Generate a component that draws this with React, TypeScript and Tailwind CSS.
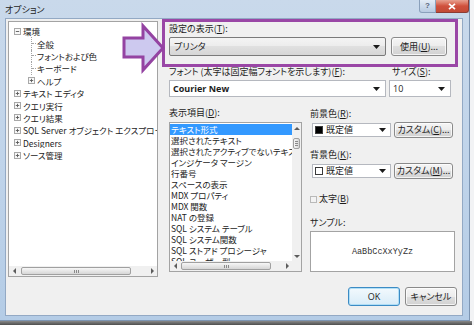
import type { ReactNode } from "react";

const JP = "font-['Noto_Sans_CJK_JP','Noto_Sans',sans-serif] [font-feature-settings:'palt']";

function DownArrow() {
  return (
    <svg width="7" height="4" viewBox="0 0 7 4" className="shrink-0">
      <path d="M0 0h7L3.5 4z" fill="#1a1a1a" />
    </svg>
  );
}

function Expander({ open = false }: { open?: boolean }) {
  return (
    <svg width="7" height="7" viewBox="0 0 7 7" className="shrink-0">
      <rect x="0.5" y="0.5" width="6" height="6" fill="#f8f8f8" stroke="#a8a8a8" />
      <path d="M1.8 3.5h3.4" stroke="#5a5a5a" strokeWidth="0.9" />
      {!open && <path d="M3.5 1.8v3.4" stroke="#5a5a5a" strokeWidth="0.9" />}
    </svg>
  );
}

function Btn({ children, className = "" }: { children: ReactNode; className?: string }) {
  return (
    <div
      className={`flex items-center justify-center rounded-[3px] border border-[#8a8a8a] bg-[linear-gradient(#f5f5f5,#ececec_50%,#dedede_50%,#d2d2d2)] shadow-[inset_0_0_0_1px_rgba(255,255,255,0.75)] ${className}`}
    >
      {children}
    </div>
  );
}

function Tri({ dir }: { dir: "up" | "down" | "left" | "right" }) {
  const d =
    dir === "up" ? "M0 4h6L3 1z" : dir === "down" ? "M0 1h6L3 4z" : dir === "left" ? "M4 0v6L1 3z" : "M1 0v6L4 3z";
  const vert = dir === "up" || dir === "down";
  return (
    <svg width={vert ? 6 : 5} height={vert ? 5 : 6} viewBox={vert ? "0 0 6 5" : "0 0 5 6"}>
      <path d={d} fill="#5c5c5c" />
    </svg>
  );
}

function Grip({ vertical = false }: { vertical?: boolean }) {
  const bar = vertical ? "h-[1px] w-[3px] bg-[#8a8a8a]" : "h-[3px] w-[1px] bg-[#8a8a8a]";
  return (
    <div className={`flex ${vertical ? "flex-col" : ""} gap-[1px]`}>
      <span className={bar} />
      <span className={bar} />
      <span className={bar} />
    </div>
  );
}

function HScroll({ thumbLeft, thumbWidth }: { thumbLeft: string; thumbWidth: string }) {
  return (
    <div className="flex h-[10px] flex-1 items-center bg-[#f0f0f0]">
      <div className="flex h-full w-[10px] items-center justify-center">
        <Tri dir="left" />
      </div>
      <div className="flex h-full flex-1 items-center">
        <div
          className={`flex h-[8px] items-center justify-center rounded-[2px] border border-[#a0a0a0] bg-linear-to-b from-[#f7f7f7] to-[#d6d6d6] ${thumbLeft} ${thumbWidth}`}
        >
          <Grip />
        </div>
      </div>
      <div className="flex h-full w-[10px] items-center justify-center">
        <Tri dir="right" />
      </div>
    </div>
  );
}

const treeTop = ["テキスト エディタ", "クエリ実行", "クエリ結果", "SQL Server オブジェクト エクスプローラー", "Designers", "ソース管理"];

const items = [
  "選択されたテキスト",
  "選択されたアクティブでないテキスト",
  "インジケータ マージン",
  "行番号",
  "スペースの表示",
  "MDX プロパティ",
  "MDX 関数",
  "NAT の登録",
  "SQL システム テーブル",
  "SQL システム関数",
  "SQL ストアド プロシージャ",
  "SQL ユーザー型",
];

function Child({ label }: { label: string }) {
  return (
    <div className="flex h-[12.4px] items-center pl-[22px]">
      <span className="flex h-full w-[5px] items-center border-l border-dotted border-[#a5a5a5]">
        <span className="w-full border-t border-dotted border-[#a5a5a5]" />
      </span>
      <span className="ml-[1px] whitespace-nowrap">{label}</span>
    </div>
  );
}

export default function App() {
  return (
    <div className={`relative h-[325px] w-[474px] overflow-hidden bg-[#f2f3f5] text-[9px] leading-[10px] text-[#1c1c1c] ${JP}`}>
      <div className="flex h-[321px] w-[470px] flex-col border-r border-b border-[#7d95b2] bg-linear-to-b from-[#c9d9eb] via-[#c0d4ea] to-[#b4cce6]">
        {/* title bar */}
        <div className="flex h-[18px] items-start">
          <span className="mt-[5px] ml-[5px] flex-1 text-[9px] text-[#1e1e1e]">オプション</span>
          <div className="flex h-[13px] w-[17px] items-center justify-center rounded-bl-[3px] border border-t-0 border-[#8aa0bb] bg-linear-to-b from-[#e3ecf6] to-[#b8cbe2]">
            <span className="font-['Liberation_Sans',sans-serif] text-[8px] font-bold text-[#56657a]">?</span>
          </div>
          <div className="flex h-[13px] w-[33px] items-center justify-center rounded-br-[3px] border border-t-0 border-l-0 border-[#8c3c34] bg-linear-to-b from-[#e6a090] via-[#d0503c] to-[#c24a36]">
            <svg width="8" height="7" viewBox="0 0 8 7">
              <path d="M1 0.8l6 5.4M7 0.8l-6 5.4" stroke="#ffffff" strokeWidth="1.7" />
            </svg>
          </div>
        </div>

        {/* client area */}
        <div className="ml-[5px] mr-[6px] flex h-[298px] flex-col border border-[#93a9c4] bg-[#f0f0f0]">
          <div className="flex items-start">
            {/* tree */}
            <div className="mt-[2px] ml-[2px] flex h-[256px] w-[150px] flex-col border border-[#a3a3a3] bg-white text-[8.5px]">
              <div className="flex-1 overflow-hidden pt-[3px]">
                <div className="flex h-[12.4px] items-center pl-[5px]">
                  <Expander open />
                  <span className="ml-[2px]">環境</span>
                </div>
                <Child label="全般" />
                <Child label="フォントおよび色" />
                <Child label="キーボード" />
                <div className="flex h-[12.4px] items-center pl-[19px]">
                  <Expander />
                  <span className="ml-[2px]">ヘルプ</span>
                </div>
                {treeTop.map((t) => (
                  <div key={t} className="flex h-[12.4px] items-center overflow-hidden pl-[5px]">
                    <Expander />
                    <span className="ml-[2px] min-w-0 overflow-hidden whitespace-nowrap">{t}</span>
                  </div>
                ))}
              </div>
              <div className="flex">
                <HScroll thumbLeft="ml-[2px]" thumbWidth="w-[110px]" />
              </div>
            </div>

            {/* right panel */}
            <div className="ml-[11px] flex flex-col">
              <div className="mt-[5px]">
                設定の表示(<u>T</u>):
              </div>
              <div className="mt-[3px] flex items-center">
                <div className="flex h-[19px] w-[217px] items-center justify-between rounded-[2px] border border-[#7a7a7a] bg-[linear-gradient(#f4f4f4,#ececec_50%,#e0e0e0_50%,#d6d6d6)] pr-[5px] pl-[4px]">
                  <span>プリンタ</span>
                  <DownArrow />
                </div>
                <Btn className="ml-[5px] h-[19px] w-[56px]">
                  使用(<u>U</u>)...
                </Btn>
              </div>

              <div className="mt-[11px] flex">
                <div className="w-[220px] whitespace-nowrap">
                  フォント (太字は固定幅フォントを示します)(<u>F</u>):
                </div>
                <div className="ml-[3px]">
                  サイズ(<u>S</u>):
                </div>
              </div>
              <div className="mt-[3px] flex">
                <div className="flex h-[17px] w-[217px] items-center justify-between border border-[#b5b8bf] bg-white pr-[5px] pl-[3px]">
                  <span className="font-['Open_Sans','Liberation_Sans',sans-serif] text-[9px] font-bold">Courier New</span>
                  <DownArrow />
                </div>
                <div className="ml-[3px] flex h-[17px] w-[62px] items-center justify-between border border-[#b5b8bf] bg-white pr-[5px] pl-[3px]">
                  <span className="font-['Open_Sans','Liberation_Sans',sans-serif]">10</span>
                  <DownArrow />
                </div>
              </div>

              <div className="mt-[11px] flex">
                {/* list */}
                <div className="flex w-[133px] flex-col">
                  <div>
                    表示項目(<u>D</u>):
                  </div>
                  <div className="mt-[4px] flex h-[150px] flex-col border border-[#a3a3a3] bg-white text-[8.5px]">
                    <div className="flex flex-1 overflow-hidden">
                      <div className="flex-1 overflow-hidden pt-[1px]">
                        <div className="flex h-[11px] items-center overflow-hidden bg-[#3399ff] pl-[1px] leading-[11px] whitespace-nowrap text-white">
                          テキスト形式
                        </div>
                        {items.map((t) => (
                          <div key={t} className="flex h-[11px] items-center overflow-hidden pl-[1px] leading-[11px] whitespace-nowrap">
                            {t}
                          </div>
                        ))}
                      </div>
                      <div className="flex w-[9px] flex-col bg-[#f0f0f0]">
                        <div className="flex h-[10px] items-center justify-center">
                          <Tri dir="up" />
                        </div>
                        <div className="flex-1">
                          <div className="mx-[1px] mt-[5px] flex h-[11px] items-center justify-center rounded-[2px] border border-[#a0a0a0] bg-linear-to-r from-[#f7f7f7] to-[#d6d6d6]">
                            <Grip vertical />
                          </div>
                        </div>
                        <div className="flex h-[10px] items-center justify-center">
                          <Tri dir="down" />
                        </div>
                      </div>
                    </div>
                    <div className="flex">
                      <HScroll thumbLeft="ml-[1px]" thumbWidth="w-[90px]" />
                      <div className="h-[10px] w-[9px] bg-[#f0f0f0]" />
                    </div>
                  </div>
                </div>

                {/* colours */}
                <div className="ml-[8px] flex w-[145px] flex-col">
                  <div className="mt-[1px]">
                    前景色(<u>R</u>):
                  </div>
                  <div className="mt-[3px] flex items-center">
                    <div className="ml-[2px] flex h-[14px] w-[79px] items-center border border-[#b5b8bf] bg-white pr-[4px] pl-[2px]">
                      <span className="h-[8px] w-[8px] border border-[#3a3a3a] bg-black" />
                      <span className="ml-[3px] flex-1">既定値</span>
                      <DownArrow />
                    </div>
                    <Btn className="ml-[3px] h-[16px] w-[59px]">
                      カスタム(<u>C</u>)...
                    </Btn>
                  </div>
                  <div className="mt-[12px]">
                    背景色(<u>K</u>):
                  </div>
                  <div className="mt-[3px] flex items-center">
                    <div className="ml-[2px] flex h-[14px] w-[79px] items-center border border-[#b5b8bf] bg-white pr-[4px] pl-[2px]">
                      <span className="h-[8px] w-[8px] border border-[#3a3a3a] bg-white" />
                      <span className="ml-[3px] flex-1">既定値</span>
                      <DownArrow />
                    </div>
                    <Btn className="ml-[3px] h-[16px] w-[59px]">
                      カスタム(<u>M</u>)...
                    </Btn>
                  </div>
                  <div className="mt-[15px] flex items-center">
                    <span className="h-[7px] w-[7px] border border-[#b9b9b9] bg-[#f3f3f3]" />
                    <span className="ml-[2px]">
                      太字(<u>B</u>)
                    </span>
                  </div>
                  <div className="mt-[14px]">サンプル:</div>
                  <div className="mt-[3px] flex h-[41px] items-center justify-center border border-[#a3a3a3] bg-white">
                    <span className="font-['Liberation_Mono',monospace] text-[8.5px] text-[#333]">AaBbCcXxYyZz</span>
                  </div>
                </div>
              </div>
            </div>
          </div>

          <div className="mt-[10px] mr-[5px] flex justify-end gap-[5px]">
            <div className="flex h-[19px] w-[52px] items-center justify-center rounded-[3px] border border-[#3c8bc4] bg-linear-to-b from-[#f2f9fd] to-[#d9ecf8] font-['Open_Sans','Liberation_Sans',sans-serif] shadow-[inset_0_0_0_1px_rgba(170,220,245,0.9)]">
              OK
            </div>
            <Btn className="h-[19px] w-[52px]">キャンセル</Btn>
          </div>
        </div>
      </div>
      <div className="h-[4px] w-[472px] bg-linear-to-b from-[#8a8a8a] to-[#4e4e4e]" />

      {/* annotation overlays */}
      <div className="pointer-events-none absolute top-[19px] left-[162px] h-[48px] w-[296px] border-[3px] border-[#9a47a6]" />
      <svg className="pointer-events-none absolute top-0 left-0" width="474" height="325" viewBox="0 0 474 325">
        <polygon points="124,38 143,38 143,26 163,48 143,70 143,57 124,57" fill="#cdc9ef" stroke="#9443a2" strokeWidth="3" strokeLinejoin="miter" />
      </svg>
    </div>
  );
}
